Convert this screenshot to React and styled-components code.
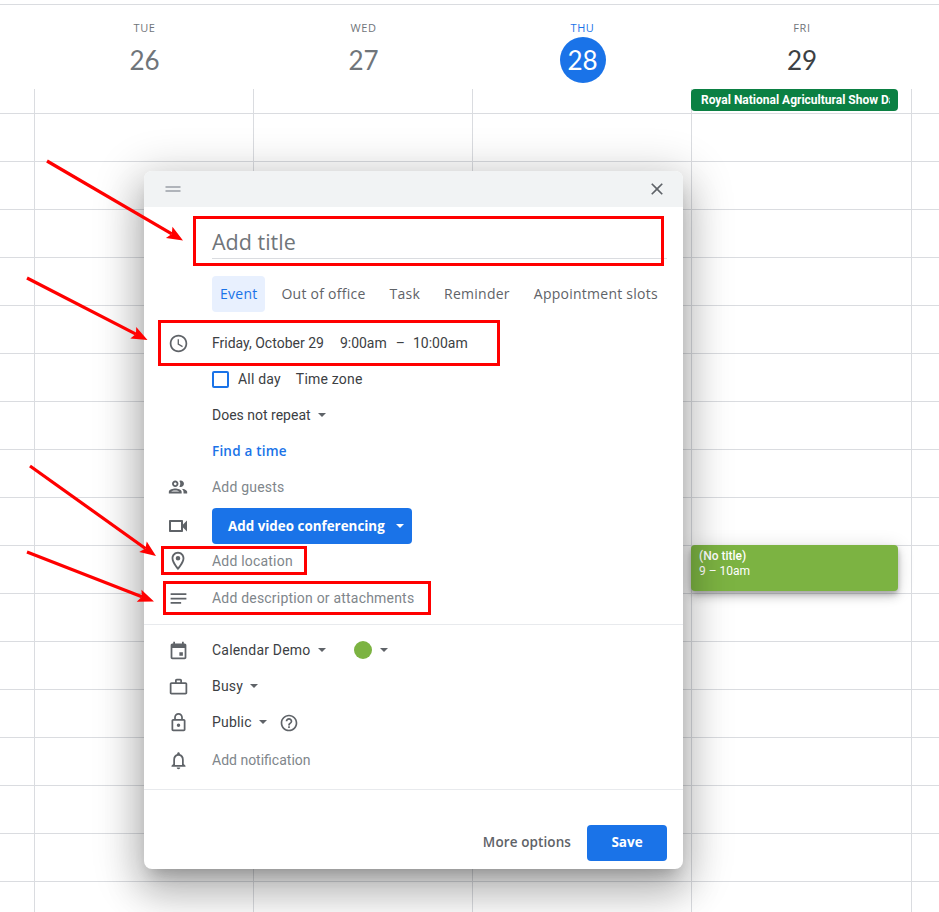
import React from "react";
import styled, { createGlobalStyle } from "styled-components";

const Global = createGlobalStyle`
  html, body { margin: 0; padding: 0; background: #fff; }
  body { font-family: Roboto, "Liberation Sans", sans-serif; overflow: hidden; }
  #root { width: 939px; height: 912px; }
`;

const Page = styled.div`
  position: relative;
  width: 939px;
  height: 912px;
  overflow: hidden;
  background: #fff;
`;

const TopRule = styled.div`
  height: 4px;
  border-bottom: 1px solid #dadce0;
`;

const DayHeader = styled.div`
  display: grid;
  grid-template-columns: 35px repeat(3, 219px) 220px 1fr;
  height: 84px;
`;

const DayCell = styled.div`
  grid-column: ${(p) => p.$col};
  display: flex;
  flex-direction: column;
  align-items: center;
  padding-top: 17px;
`;

const DayName = styled.div`
  font-family: "Open Sans", sans-serif;
  font-size: 11px;
  line-height: 11px;
  font-weight: 500;
  letter-spacing: .6px;
  color: ${(p) => (p.$today ? "#1a73e8" : "#70757a")};
  margin-bottom: 4px;
`;

const DayNumber = styled.div`
  width: 46px;
  height: 46px;
  border-radius: 50%;
  display: flex;
  align-items: center;
  justify-content: center;
  font-family: Lato, sans-serif;
  font-size: 26px;
  color: ${(p) => (p.$today ? "#fff" : p.$dark ? "#3c4043" : "#70757a")};
  background: ${(p) => (p.$today ? "#1a73e8" : "transparent")};
`;

const Grid = styled.div`
  display: grid;
  grid-template-columns: 35px repeat(3, 219px) 220px 1fr;
  grid-template-rows: 25px;
  grid-auto-rows: 48px;
`;

const Cell = styled.div`
  position: relative;
  box-sizing: border-box;
  border-bottom: 1px solid #dadce0;
  border-right: ${(p) => (p.$last ? "none" : "1px solid #dadce0")};
`;

const AllDayChip = styled.div`
  width: 207px;
  height: 22px;
  margin-left: -1px;
  box-sizing: border-box;
  background: #0b8043;
  border-radius: 4px;
  color: #fff;
  font-family: Roboto, sans-serif;
  font-size: 12px;
  font-weight: 700;
  line-height: 22px;
  padding: 0 8px 0 10px;
  white-space: nowrap;
  overflow: hidden;
  & > span { display: block; overflow: hidden; }
`;

const EventCard = styled.div`
  position: absolute;
  left: -1px;
  top: -1px;
  width: 207px;
  height: 46px;
  box-sizing: border-box;
  background: #7cb342;
  border-radius: 4px;
  padding: 4px 8px;
  color: #fff;
  font-size: 12px;
  line-height: 15px;
  box-shadow: 0 6px 10px rgba(0,0,0,.14), 0 1px 18px rgba(0,0,0,.12), 0 3px 5px rgba(0,0,0,.2);
  z-index: 1;
`;

const EventTitle = styled.div`
  font-weight: 500;
`;

const Modal = styled.div`
  position: absolute;
  left: 144px;
  top: 171px;
  width: 539px;
  height: 698px;
  background: #fff;
  border-radius: 8px;
  overflow: hidden;
  box-shadow: 0 24px 38px 3px rgba(0,0,0,.16), 0 9px 46px 8px rgba(0,0,0,.2), 0 11px 15px -7px rgba(0,0,0,.2);
  z-index: 2;
  display: flex;
  flex-direction: column;
`;

const DragBar = styled.div`
  height: 36px;
  flex: none;
  background: #f1f3f4;
  display: flex;
  align-items: center;
  justify-content: space-between;
  padding: 0 16px 0 19px;
`;

const TitleField = styled.div`
  margin: 18px 16px 0 68px;
  height: 34px;
  box-sizing: border-box;
  border-bottom: 1px solid #dadce0;
  font-family: "Open Sans", sans-serif;
  font-size: 21.5px;
  line-height: 33px;
  color: #70757a;
`;

const Tabs = styled.div`
  display: flex;
  gap: 8px;
  margin: 17px 0 0 68px;
`;

const Tab = styled.div`
  height: 36px;
  padding: 0 8px 2px;
  box-sizing: border-box;
  border-radius: 4px;
  display: flex;
  align-items: center;
  font-family: "Open Sans", sans-serif;
  font-size: 14px;
  font-weight: 500;
  letter-spacing: .25px;
  color: ${(p) => (p.$active ? "#1a73e8" : "#5f6368")};
  background: ${(p) => (p.$active ? "#e8f0fe" : "transparent")};
`;

const Row = styled.div`
  display: grid;
  grid-template-columns: 68px 1fr;
  align-items: center;
  height: ${(p) => p.$h}px;
  margin-top: ${(p) => p.$mt || 0}px;
  flex: none;
`;

const IconSlot = styled.div`
  display: flex;
  justify-content: center;
  align-items: center;
  color: #5f6368;
`;

const Content = styled.div`
  grid-column: 2;
  display: flex;
  align-items: center;
  font-size: 14px;
  letter-spacing: ${(p) => (p.$tight ? 0 : ".2px")};
  color: ${(p) => (p.$muted ? "#80868b" : "#3c4043")};
`;

const DateText = styled.span`
  margin-right: ${(p) => p.$mr || 0}px;
`;

const CheckBox = styled.span`
  width: 13px;
  height: 13px;
  border: 2px solid #1a73e8;
  border-radius: 2px;
  margin-right: 9px;
`;

const Link = styled.span`
  font-family: "Open Sans", sans-serif;
  font-size: 13.5px;
  font-weight: 600;
  color: #1a73e8;
`;

const Caret = styled.span`
  width: 0;
  height: 0;
  border-left: 4.5px solid transparent;
  border-right: 4.5px solid transparent;
  border-top: 4.5px solid ${(p) => p.$color || "#5f6368"};
  margin-left: ${(p) => p.$ml || 7}px;
`;

const ConfButton = styled.div`
  width: 200px;
  height: 36px;
  box-sizing: border-box;
  background: #1a73e8;
  border-radius: 4px;
  display: flex;
  align-items: center;
  padding: 0 0 1px 16px;
  color: #fff;
  font-family: "Open Sans", sans-serif;
  font-size: 13.4px;
  font-weight: 700;
  letter-spacing: 0;
`;

const Divider = styled.div`
  height: 1px;
  background: #e8eaed;
  flex: none;
  margin-top: ${(p) => p.$mt || 0}px;
`;

const ColorDot = styled.span`
  width: 18px;
  height: 18px;
  border-radius: 50%;
  background: #7cb342;
  margin-left: 28px;
`;

const Footer = styled.div`
  display: flex;
  justify-content: flex-end;
  align-items: center;
  padding: 35px 16px 0 0;
  gap: 16px;
`;

const TextButton = styled.span`
  font-family: "Open Sans", sans-serif;
  font-size: 13.5px;
  font-weight: 600;
  letter-spacing: .1px;
  color: #5f6368;
  padding-bottom: 2px;
`;

const SaveButton = styled.div`
  width: 80px;
  height: 36px;
  box-sizing: border-box;
  padding-bottom: 2px;
  background: #1a73e8;
  border-radius: 4px;
  color: #fff;
  display: flex;
  align-items: center;
  justify-content: center;
  font-family: "Open Sans", sans-serif;
  font-size: 13.5px;
  font-weight: 700;
`;

const RedBox = styled.div`
  position: absolute;
  left: ${(p) => p.$x}px;
  top: ${(p) => p.$y}px;
  width: ${(p) => p.$w}px;
  height: ${(p) => p.$h}px;
  box-sizing: border-box;
  border: 3px solid #f00;
  z-index: 3;
`;

const Arrows = styled.svg`
  position: absolute;
  left: 0;
  top: 0;
  z-index: 3;
  pointer-events: none;
`;

const Icon = ({ d, size = 21 }) => (
  <svg width={size} height={size} viewBox="0 0 24 24" fill="currentColor">
    <path d={d} />
  </svg>
);

const icons = {
  clock: "M11.99 2C6.47 2 2 6.48 2 12s4.47 10 9.99 10C17.52 22 22 17.52 22 12S17.52 2 11.99 2zM12 20c-4.42 0-8-3.58-8-8s3.58-8 8-8 8 3.58 8 8-3.58 8-8 8zm.5-13H11v6l5.25 3.15.75-1.23-4.5-2.67z",
  people: "M9 13.75c-2.34 0-7 1.17-7 3.5V19h14v-1.75c0-2.33-4.66-3.5-7-3.5zM4.34 17c.84-.58 2.87-1.25 4.66-1.25s3.82.67 4.66 1.25H4.34zM9 12c1.93 0 3.5-1.57 3.5-3.5S10.93 5 9 5 5.5 6.57 5.5 8.5 7.07 12 9 12zm0-5c.83 0 1.5.67 1.5 1.5S9.83 10 9 10s-1.5-.67-1.5-1.5S8.17 7 9 7zm7.04 6.81c1.16.84 1.96 1.96 1.96 3.44V19h4v-1.75c0-2.02-3.5-3.17-5.96-3.44zM15 12c1.93 0 3.5-1.57 3.5-3.5S16.93 5 15 5c-.54 0-1.04.13-1.5.35.63.89 1 1.98 1 3.15s-.37 2.26-1 3.15c.46.22.96.35 1.5.35z",
  video: "M15 8v8H5V8h10m1-2H4c-.55 0-1 .45-1 1v10c0 .55.45 1 1 1h12c.55 0 1-.45 1-1v-3.5l4 4v-11l-4 4V7c0-.55-.45-1-1-1z",
  pin: "M12 2C8.13 2 5 5.13 5 9c0 5.25 7 13 7 13s7-7.75 7-13c0-3.87-3.13-7-7-7zM7 9c0-2.76 2.24-5 5-5s5 2.24 5 5c0 2.88-2.88 7.19-5 9.88C9.92 16.21 7 11.85 7 9zm5 2.5a2.5 2.5 0 1 0 0-5 2.5 2.5 0 0 0 0 5z",
  notes: "M3 18h12v-2H3v2zM3 6v2h18V6H3zm0 7h18v-2H3v2z",
  calendar: "M19 4h-1V2h-2v2H8V2H6v2H5c-1.1 0-2 .9-2 2v14c0 1.1.9 2 2 2h14c1.1 0 2-.9 2-2V6c0-1.1-.9-2-2-2zm0 16H5V9h14v11zm-6-6h4v4h-4z",
  case: "M20 7h-4V5c0-1.1-.9-2-2-2h-4c-1.1 0-2 .9-2 2v2H4c-1.1 0-2 .9-2 2v10c0 1.1.9 2 2 2h16c1.1 0 2-.9 2-2V9c0-1.1-.9-2-2-2zM10 5h4v2h-4V5zm10 14H4V9h16v10z",
  lock: "M18 8h-1V6c0-2.76-2.24-5-5-5S7 3.24 7 6v2H6c-1.1 0-2 .9-2 2v10c0 1.1.9 2 2 2h12c1.1 0 2-.9 2-2V10c0-1.1-.9-2-2-2zM9 6c0-1.66 1.34-3 3-3s3 1.34 3 3v2H9V6zm9 14H6V10h12v10zm-6-3a2 2 0 1 0 0-4 2 2 0 0 0 0 4z",
  bell: "M12 22c1.1 0 2-.9 2-2h-4c0 1.1.9 2 2 2zm6-6v-5c0-3.07-1.63-5.64-4.5-6.32V4c0-.83-.67-1.5-1.5-1.5s-1.5.67-1.5 1.5v.68C7.64 5.36 6 7.92 6 11v5l-2 2v1h16v-1l-2-2zm-2 1H8v-6c0-2.48 1.51-4.5 4-4.5s4 2.02 4 4.5v6z",
  help: "M11 18h2v-2h-2v2zm1-16C6.48 2 2 6.48 2 12s4.48 10 10 10 10-4.48 10-10S17.52 2 12 2zm0 18c-4.41 0-8-3.59-8-8s3.59-8 8-8 8 3.59 8 8-3.59 8-8 8zm0-14c-2.21 0-4 1.79-4 4h2c0-1.1.9-2 2-2s2 .9 2 2c0 2-3 1.75-3 5h2c0-2.25 3-2.5 3-5 0-2.21-1.79-4-4-4z",
  close: "M19 6.41 17.59 5 12 10.59 6.41 5 5 6.41 10.59 12 5 17.59 6.41 19 12 13.41 17.59 19 19 17.59 13.41 12z",
  drag: "M3 8.8h18v1.7H3zM3 13.6h18v1.7H3z",
};

const iconSizes = { people: 22, pin: 22, video: 24 };

const HelpWrap = styled.span`
  display: flex;
  margin: 2px 0 0 12px;
  color: #5f6368;
`;

const DragIcon = styled.span`
  display: flex;
  color: #9aa0a6;
`;

const CloseIcon = styled.span`
  display: flex;
  color: #5f6368;
`;

const days = [
  { col: 2, name: "TUE", num: 26 },
  { col: 3, name: "WED", num: 27 },
  { col: 4, name: "THU", num: 28, today: true },
  { col: 5, name: "FRI", num: 29, dark: true },
];

const arrows = [
  { x1: 47, y1: 161, x2: 183, y2: 240.5 },
  { x1: 27, y1: 278, x2: 147.5, y2: 340 },
  { x1: 30, y1: 466, x2: 156, y2: 556 },
  { x1: 27, y1: 552, x2: 154, y2: 601.5 },
];

function Arrow({ x1, y1, x2, y2 }) {
  const a = Math.atan2(y2 - y1, x2 - x1);
  const L = 16, W = 6.5;
  const c = Math.cos(a), s = Math.sin(a);
  const bx = x2 - L * c;
  const by = y2 - L * s;
  const nx = -s * W;
  const ny = c * W;
  const ix = x2 - (L - 3) * c;
  const iy = y2 - (L - 3) * s;
  return (
    <g>
      <line x1={x1} y1={y1} x2={ix} y2={iy} stroke="#f00" strokeWidth="3.2" />
      <polygon points={`${x2},${y2} ${bx + nx},${by + ny} ${ix},${iy} ${bx - nx},${by - ny}`} fill="#f00" />
    </g>
  );
}

const Row1 = ({ icon, h, mt, children, muted, tight }) => (
  <Row $h={h} $mt={mt}>
    {icon ? <IconSlot><Icon d={icons[icon]} size={iconSizes[icon]} /></IconSlot> : null}
    <Content $muted={muted} $tight={tight}>{children}</Content>
  </Row>
);

export default function App() {
  const cells = [];
  for (let r = 0; r < 18; r++) {
    for (let c = 0; c < 6; c++) {
      cells.push(
        <Cell key={`${r}-${c}`} $last={c === 5}>
          {r === 0 && c === 4 ? (
            <AllDayChip><span>Royal National Agricultural Show Day</span></AllDayChip>
          ) : null}
          {r === 10 && c === 4 ? (
            <EventCard>
              <EventTitle>(No title)</EventTitle>
              <div>9 – 10am</div>
            </EventCard>
          ) : null}
        </Cell>
      );
    }
  }
  return (
    <Page>
      <Global />
      <TopRule />
      <DayHeader>
        {days.map((d) => (
          <DayCell key={d.name} $col={d.col}>
            <DayName $today={d.today}>{d.name}</DayName>
            <DayNumber $today={d.today} $dark={d.dark}>{d.num}</DayNumber>
          </DayCell>
        ))}
      </DayHeader>
      <Grid>{cells}</Grid>

      <Modal>
        <DragBar>
          <DragIcon><Icon d={icons.drag} size={20} /></DragIcon>
          <CloseIcon><Icon d={icons.close} size={20} /></CloseIcon>
        </DragBar>
        <TitleField>Add title</TitleField>
        <Tabs>
          <Tab $active>Event</Tab>
          <Tab>Out of office</Tab>
          <Tab>Task</Tab>
          <Tab>Reminder</Tab>
          <Tab>Appointment slots</Tab>
        </Tabs>
        <Row1 icon="clock" h={36} mt={13} tight>
          <DateText $mr={16}>Friday, October 29</DateText>
          <DateText $mr={9}>9:00am</DateText>
          <DateText $mr={8}>–</DateText>
          <DateText>10:00am</DateText>
        </Row1>
        <Row1 h={36}>
          <CheckBox />
          <DateText $mr={15}>All day</DateText>
          <DateText>Time zone</DateText>
        </Row1>
        <Row1 h={36} tight>Does not repeat<Caret /></Row1>
        <Row1 h={36}><Link>Find a time</Link></Row1>
        <Row1 icon="people" h={36} muted>Add guests</Row1>
        <Row1 icon="video" h={36} mt={3}>
          <ConfButton>Add video conferencing<Caret $color="#fff" $ml={11} /></ConfButton>
        </Row1>
        <Row1 icon="pin" h={34} muted>Add location</Row1>
        <Row1 icon="notes" h={36} mt={2} muted>Add description or attachments</Row1>
        <Divider $mt={8} />
        <Row1 icon="calendar" h={36} mt={7}>
          Calendar Demo<Caret /><ColorDot /><Caret $ml={8} />
        </Row1>
        <Row1 icon="case" h={36}>Busy<Caret /></Row1>
        <Row1 icon="lock" h={36}>
          Public<Caret />
          <HelpWrap><Icon d={icons.help} size={20} /></HelpWrap>
        </Row1>
        <Row1 icon="bell" h={36} mt={2} muted tight>Add notification</Row1>
        <Divider $mt={11} />
        <Footer>
          <TextButton>More options</TextButton>
          <SaveButton>Save</SaveButton>
        </Footer>
      </Modal>

      <RedBox $x={193} $y={216} $w={471} $h={50} />
      <RedBox $x={158} $y={320} $w={342} $h={46} />
      <RedBox $x={161} $y={546} $w={146} $h={29} />
      <RedBox $x={163} $y={581} $w={268} $h={34} />
      <Arrows width="939" height="912" viewBox="0 0 939 912">
        {arrows.map((a, i) => <Arrow key={i} {...a} />)}
      </Arrows>
    </Page>
  );
}
